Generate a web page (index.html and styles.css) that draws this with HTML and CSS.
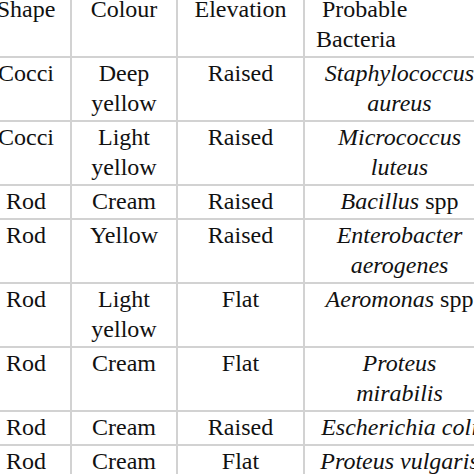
FILE: index.html
```html
<!DOCTYPE html>
<html>
<head>
<meta charset="utf-8">
<link rel="stylesheet" href="styles.css">
</head>
<body>
<div class="frame">
<table class="tbl">
<colgroup>
<col class="c1"><col class="c2"><col class="c3"><col class="c4">
</colgroup>
<thead>
<tr>
<th>Shape</th>
<th>Colour</th>
<th>Elevation</th>
<th class="left">Probable<br>Bacteria</th>
</tr>
</thead>
<tbody>
<tr><td>Cocci</td><td>Deep<br>yellow</td><td>Raised</td><td><i>Staphylococcus<br>aureus</i></td></tr>
<tr><td>Cocci</td><td>Light<br>yellow</td><td>Raised</td><td><i>Micrococcus<br>luteus</i></td></tr>
<tr><td>Rod</td><td>Cream</td><td>Raised</td><td><i>Bacillus</i> spp</td></tr>
<tr><td>Rod</td><td>Yellow</td><td>Raised</td><td><i>Enterobacter<br>aerogenes</i></td></tr>
<tr><td>Rod</td><td>Light<br>yellow</td><td>Flat</td><td><i>Aeromonas</i> spp</td></tr>
<tr><td>Rod</td><td>Cream</td><td>Flat</td><td><i>Proteus<br>mirabilis</i></td></tr>
<tr><td>Rod</td><td>Cream</td><td>Raised</td><td><i>Escherichia coli</i></td></tr>
<tr><td>Rod</td><td>Cream</td><td>Flat</td><td><i>Proteus vulgaris</i></td></tr>
</tbody>
</table>
</div>
</body>
</html>
```
FILE: styles.css
```css
html, body {
  margin: 0;
  padding: 0;
  background: #ffffff;
}
.frame {
  width: 474px;
  height: 474px;
  overflow: hidden;
  background: #ffffff;
}
.tbl {
  border-collapse: collapse;
  table-layout: fixed;
  width: 514px;
  margin-left: -20px;
  margin-top: -8px;
  font-family: "Liberation Serif", "Times New Roman", serif;
  font-size: 24px;
  line-height: 30px;
  color: #111111;
}
.c1 { width: 90px; }
.c2 { width: 106px; }
.c3 { width: 127px; }
.c4 { width: 191px; }
.tbl th,
.tbl td {
  border: 2px solid #d2d2d2;
  padding: 0 2px 2px;
  vertical-align: top;
  text-align: center;
  white-space: nowrap;
  font-weight: normal;
}
.tbl th.left {
  text-align: left;
  padding-left: 11px;
  text-indent: 6px;
}
```
